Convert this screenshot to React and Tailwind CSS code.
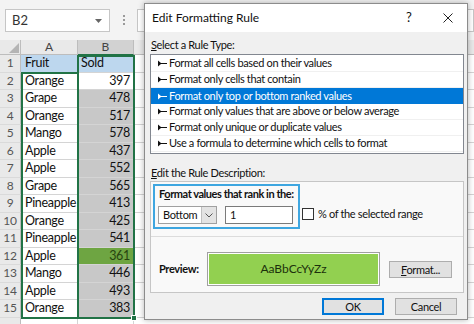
import React from "react";

const data = [
  ["Fruit", "Sold"],
  ["Orange", 397],
  ["Grape", 478],
  ["Orange", 517],
  ["Mango", 578],
  ["Apple", 437],
  ["Apple", 552],
  ["Grape", 565],
  ["Pineapple", 413],
  ["Orange", 425],
  ["Pineapple", 541],
  ["Apple", 361],
  ["Mango", 446],
  ["Apple", 493],
  ["Orange", 383],
  ["", ""],
];

const rules = [
  "Format all cells based on their values",
  "Format only cells that contain",
  "Format only top or bottom ranked values",
  "Format only values that are above or below average",
  "Format only unique or duplicate values",
  "Use a formula to determine which cells to format",
];

function Bullet({ color }) {
  return (
    <svg width="9" height="7" viewBox="0 0 9 7" className="shrink-0">
      <path d="M0 0.5v6l3.5-3z" fill={color} />
      <path d="M2 3.5h7" stroke={color} strokeWidth="1" />
    </svg>
  );
}

function Sheet() {
  return (
    <div className="flex flex-col">
      {/* name box + formula bar */}
      <div className="h-[40px] bg-[#f3f3f3] flex items-start pt-[9px] pl-[5px]">
        <div className="w-[105px] h-[23px] bg-white border border-[#c6c6c6] flex items-center justify-between pl-[6px] pr-[7px]">
          <span className="text-[13px] text-[#333]">B2</span>
          <svg width="7" height="4" viewBox="0 0 7 4">
            <path d="M0 0h7L3.5 4z" fill="#666" />
          </svg>
        </div>
        <div className="w-[27px] flex flex-col items-center gap-[2px] mt-[6px]">
          <span className="w-[2px] h-[2px] bg-[#9a9a9a]" />
          <span className="w-[2px] h-[2px] bg-[#9a9a9a]" />
          <span className="w-[2px] h-[2px] bg-[#9a9a9a]" />
        </div>
        <div className="flex-1 h-[23px] bg-white border border-[#c6c6c6]" />
      </div>

      {/* column headers */}
      <div className="flex h-[15px] text-[12px] leading-[14px] text-[#444]">
        <div className="w-[21px] bg-[#e9e9e9] border-r border-b border-[#bdbdbd] flex items-end justify-end p-[1px]">
          <svg width="10" height="10" viewBox="0 0 10 10">
            <path d="M10 0v10H0z" fill="#b4b4b4" />
          </svg>
        </div>
        <div className="w-[57px] bg-[#e9e9e9] border-r border-b border-[#bdbdbd] text-center">A</div>
        <div className="w-[56px] bg-[#d2d2d2] border-r border-b border-[#bdbdbd] border-b-[#217346] text-center">B</div>
        <div className="flex-1 bg-[#e9e9e9] border-b border-[#bdbdbd]" />
      </div>

      {data.map(([fruit, sold], i) => {
        const header = i === 0;
        let bBg = "bg-[#c8c8c8]";
        if (header) bBg = "bg-[#bdd7ee]";
        else if (i === 1 || i === 15) bBg = "bg-white";
        else if (i === 11) bBg = "bg-[#6ea542]";
        return (
          <div key={i} className="flex h-[17.5px] text-[12.5px] leading-[16px] tracking-[-0.3px] text-[#111]">
            <div className="w-[21px] bg-[#e9e9e9] border-r border-b border-[#bdbdbd] border-b-[#dadada] text-center text-[#555] text-[12px]">
              {i < 15 ? i + 1 : ""}
            </div>
            <div
              className={`w-[57px] border-r border-b border-[#d4d4d4] pl-[4px] whitespace-nowrap overflow-hidden ${
                header ? "bg-[#bdd7ee]" : "bg-white"
              }`}
            >
              {fruit}
            </div>
            <div
              className={`w-[56px] border-r border-b border-[#d4d4d4] ${bBg} ${
                header ? "pl-[3px] text-left" : "pr-[3px] text-right"
              } ${i === 11 ? "text-[#26430f]" : ""}`}
            >
              {sold}
            </div>
            <div className="flex-1 border-b border-[#d4d4d4]" />
          </div>
        );
      })}

      {/* selection outlines */}
      <div className="absolute left-[21px] top-[72px] w-[58px] h-[247px] border-2 border-[#217346]" />
      <div className="absolute left-[77px] top-[55px] w-[58px] h-[264px] border-2 border-[#217346]" />
      <div className="absolute left-[131px] top-[315px] w-[6px] h-[6px] bg-[#217346] border border-white" />
    </div>
  );
}

function Dialog() {
  return (
    <div className="absolute left-[144px] top-[3px] w-[324px] h-[317px] border border-[#8c8c8c] bg-[#f0f0f0] shadow-[0_0_6px_rgba(0,0,0,0.3)] flex flex-col text-[11px] tracking-[-0.35px] text-[#111]">
      {/* title bar */}
      <div className="h-[28px] bg-white flex items-center pl-[7px] tracking-normal">
        <span className="text-[12px]">Edit Formatting Rule</span>
        <div className="ml-auto flex items-center pr-[9px]">
          <span className="w-[20px] text-center text-[13px]">?</span>
          <span className="w-[20px] ml-[19px] flex justify-center">
            <svg width="10" height="10" viewBox="0 0 10 10">
              <path d="M0.5 0.5l9 9M9.5 0.5l-9 9" stroke="#222" strokeWidth="1" />
            </svg>
          </span>
        </div>
      </div>

      <div className="flex-1 flex flex-col pl-[5px] pr-[3px]">
        <div className="mt-[6px] h-[14px] leading-[14px] pl-[1px]">
          <u>S</u>elect a Rule Type:
        </div>

        {/* rule type list */}
        <div className="mt-[2px] w-[314px] h-[100px] bg-white border border-[#828790] pt-[1px]">
          {rules.map((r, i) => {
            const sel = i === 2;
            return (
              <div
                key={r}
                className={`h-[16px] flex items-center gap-[2px] pl-[7px] whitespace-nowrap ${
                  sel ? "bg-[#0078d7] text-white" : "border-b border-[#f0f0f0]"
                }`}
              >
                <Bullet color={sel ? "#fff" : "#111"} />
                <span>{r}</span>
              </div>
            );
          })}
        </div>

        <div className="mt-[12px] h-[14px] leading-[14px] pl-[1px]">
          <u>E</u>dit the Rule Description:
        </div>

        {/* description group */}
        <div className="mt-[1px] w-[314px] h-[112px] border border-[#c6c6c6] bg-[#f9f9f9] flex flex-col">
          <div className="flex items-start">
            <div className="ml-[2px] mt-[2px] w-[147px] h-[45px] border-2 border-[#3ea6e0] pl-[3px] pt-[1px]">
              <div className="h-[14px] leading-[14px] font-bold pl-[1px] whitespace-nowrap tracking-[-0.45px]">
                F<u>o</u>rmat values that rank in the:
              </div>
              <div className="mt-[5px] flex">
                <div className="w-[59px] h-[18px] bg-white border border-[#a0a0a0] flex">
                  <span className="flex-1 pl-[4px] leading-[16px]">Bottom</span>
                  <span className="w-[15px] bg-[#e3e3e3] border-l border-[#c0c0c0] flex items-center justify-center">
                    <svg width="8" height="5" viewBox="0 0 8 5">
                      <path d="M0.5 0.5L4 4l3.5-3.5" stroke="#555" fill="none" strokeWidth="1" />
                    </svg>
                  </span>
                </div>
                <div className="ml-[8px] w-[68px] h-[18px] bg-white border border-[#7a7a7a] pl-[4px] leading-[16px]">
                  1
                </div>
              </div>
            </div>
            <div className="ml-[2px] mt-[26px] w-[12px] h-[12px] bg-white border border-[#333]" />
            <span className="ml-[4px] mt-[25px] leading-[14px] whitespace-nowrap">% of the selected range</span>
          </div>

          <div className="mt-[7px] h-px bg-[#dcdcdc]" />

          <div className="mt-[15px] flex items-center">
            <span className="w-[56px] pl-[8px] font-bold">Preview:</span>
            <div className="w-[173px] h-[34px] border border-[#a0a0a0] bg-white p-[1px]">
              <div className="w-full h-full bg-[#92d050] flex items-center justify-center text-[12px] tracking-normal text-[#1c300c]">
                AaBbCcYyZz
              </div>
            </div>
            <div className="ml-[9px] w-[63px] h-[17px] bg-[#e1e1e1] border border-[#adadad] text-center leading-[15px]">
              <u>F</u>ormat...
            </div>
          </div>
        </div>

        {/* buttons */}
        <div className="mt-[5px] flex justify-end pr-[7px] gap-[11px]">
          <div className="w-[62px] h-[17px] bg-[#e1e1e1] border-2 border-[#0078d7] text-center leading-[13px]">
            OK
          </div>
          <div className="w-[62px] h-[17px] bg-[#e1e1e1] border border-[#adadad] text-center leading-[15px]">
            Cancel
          </div>
        </div>
      </div>
    </div>
  );
}

export default function App() {
  return (
    <div className="relative w-[474px] h-[324px] overflow-hidden bg-white font-['Lato',sans-serif]">
      <Sheet />
      <Dialog />
    </div>
  );
}
